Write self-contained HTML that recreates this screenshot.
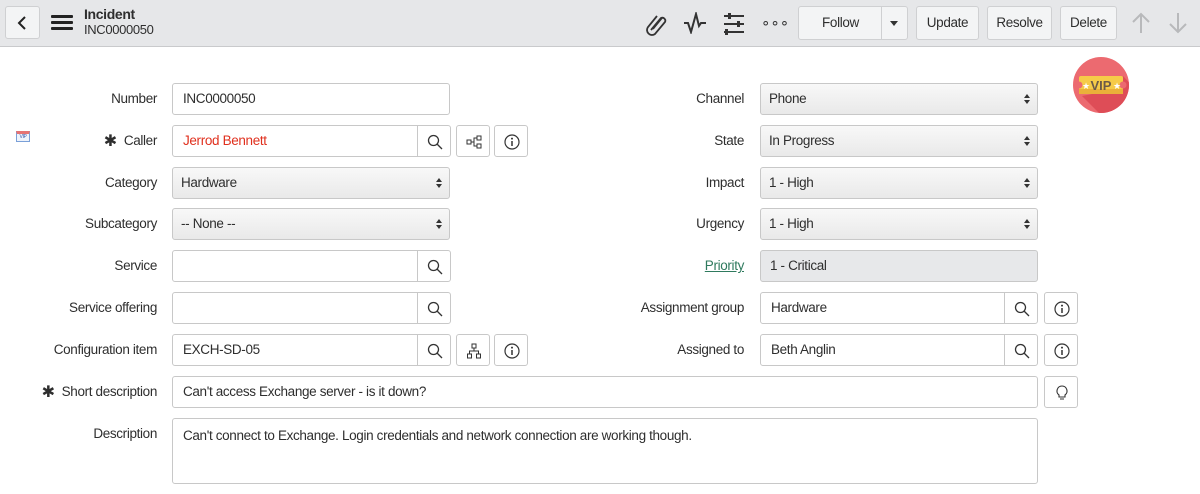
<!DOCTYPE html>
<html><head><meta charset="utf-8"><style>
*{box-sizing:border-box;margin:0;padding:0}
body{width:1200px;height:494px;background:#fff;font-family:"Liberation Sans",sans-serif;font-size:13px;color:#2e2e2e;position:relative;overflow:hidden;letter-spacing:-0.35px}
.hdr{position:absolute;left:0;top:0;width:1200px;height:47px;background:#e6e7e9;border-bottom:1px solid #c9cacc}
.a{position:absolute}
.btn{position:absolute;border:1px solid #cfd0d2;border-radius:3px;background:#f3f4f5;text-align:center;line-height:32px;font-size:13.5px;color:#2e2e2e}
.lbl{position:absolute;text-align:right;line-height:32px;font-size:13.5px;color:#2e2e2e}
.inp{position:absolute;height:32px;border:1px solid #c8c8c8;border-radius:3px;background:#fff;line-height:30px;padding-left:10px;font-size:13.5px}
.sel{background:linear-gradient(#f8f8f8,#e9e9e9);padding-left:8px}
.sel:after{content:"";position:absolute;right:7px;top:10px;border:3px solid transparent;border-bottom:4px solid #333;border-top:0;width:0}
.sel:before{content:"";position:absolute;right:7px;top:16px;border:3px solid transparent;border-top:4px solid #333;border-bottom:0;width:0}
.sb{position:absolute;height:32px;width:34px;border:1px solid #c8c8c8;border-radius:0 3px 3px 0;background:#fff}
.ib{position:absolute;height:32px;width:34px;border:1px solid #c8c8c8;border-radius:3px;background:#fff}
.sb svg,.ib svg{position:absolute;left:9px;top:8px}
.ast{display:inline-block;font-size:16px;position:relative;top:1px;margin-right:7px}
</style></head><body>
<div class="hdr"></div>
<div class="btn" style="left:5px;top:6px;width:35px;height:33px"><svg width="12" height="14" style="margin-top:9px" viewBox="0 0 12 14"><path d="M8 1L2 7l6 6" stroke="#222" stroke-width="2" fill="none"/></svg></div>
<div class="a" style="left:51px;top:15px;width:22px;height:3px;background:#222;border-radius:1px;box-shadow:0 6px 0 #222,0 12px 0 #222"></div>
<div class="a" style="left:84px;top:6px;font-weight:bold;font-size:14px">Incident</div>
<div class="a" style="left:84px;top:22px;font-size:13px">INC0000050</div>
<svg class="a" style="left:644px;top:12px" width="24" height="24" viewBox="0 0 24 24"><path d="M7 18L17 6a3 3 0 0 1 4 4L11 22a5 5 0 0 1-7-7L13 4" stroke="#333" stroke-width="1.8" fill="none"/><path d="M9 17l9-11" stroke="#333" stroke-width="1.6" fill="none"/></svg>
<svg class="a" style="left:683px;top:12px" width="24" height="22" viewBox="0 0 24 22"><path d="M1 11h4l3 9 5-18 3 12 2-3h5" stroke="#333" stroke-width="2" fill="none"/></svg>
<svg class="a" style="left:722px;top:12px" width="24" height="24" viewBox="0 0 24 24"><path d="M2 4h20M2 12h20M2 20h20" stroke="#333" stroke-width="2"/><rect x="6" y="1" width="3" height="6" fill="#333"/><rect x="15" y="9" width="3" height="6" fill="#333"/><rect x="3" y="17" width="3" height="6" fill="#333"/></svg>
<div class="a" style="left:761px;top:14px;font-size:15px;letter-spacing:0;color:#333">∘∘∘</div>
<div class="btn" style="left:798px;top:6px;width:110px;height:34px;line-height:32px"><span style="position:absolute;left:0;width:83px">Follow</span><span style="position:absolute;left:82px;top:0;height:32px;border-left:1px solid #cfd0d2;width:26px"></span><span style="position:absolute;left:91px;top:14px;border:4px solid transparent;border-top:5px solid #333"></span></div>
<div class="btn" style="left:916px;top:6px;width:63px;height:34px">Update</div>
<div class="btn" style="left:987px;top:6px;width:65px;height:34px">Resolve</div>
<div class="btn" style="left:1060px;top:6px;width:57px;height:34px">Delete</div>
<svg class="a" style="left:1131px;top:12px" width="20" height="22" viewBox="0 0 20 22"><path d="M10 21V2M2 10l8-8 8 8" stroke="#b8b9bb" stroke-width="2" fill="none"/></svg>
<svg class="a" style="left:1168px;top:12px" width="20" height="22" viewBox="0 0 20 22"><path d="M10 1v19M2 12l8 8 8-8" stroke="#b8b9bb" stroke-width="2" fill="none"/></svg>
<!-- VIP -->
<svg class="a" style="left:1072px;top:56px" width="58" height="58" viewBox="0 0 58 58"><defs><clipPath id="c"><circle cx="29" cy="29" r="28"/></clipPath></defs><circle cx="29" cy="29" r="28" fill="#ec6a70"/><path d="M20 38H51V20L70 40 40 70 10 40z" fill="#de4d57" clip-path="url(#c)"/><rect x="7" y="20" width="44" height="18" rx="2" fill="#f6cb48"/><rect x="7" y="33" width="44" height="5" fill="#eab03a"/><circle cx="7" cy="29" r="3.5" fill="#ec6a70"/><circle cx="51" cy="29" r="3.5" fill="#ec6a70"/><text x="29" y="34" text-anchor="middle" font-family="Liberation Sans" font-weight="bold" font-size="13" letter-spacing="0" fill="#6b5a48">VIP</text><text x="10" y="33" font-size="9" fill="#fff">★</text><text x="41" y="33" font-size="9" fill="#fff">★</text></svg>
<div class="a" style="left:16px;top:131px;width:14px;height:11px;border:1px solid #7aa0d8;border-top:3px solid #e57373;background:#eef3fb;font-size:5px;color:#3355aa;text-align:center;line-height:7px">VIP</div>

<div class="lbl" style="right:1043px;top:83px">Number</div>
<div class="lbl" style="right:1043px;top:125px"><span class="ast">✱</span>Caller</div>
<div class="lbl" style="right:1043px;top:167px">Category</div>
<div class="lbl" style="right:1043px;top:208px">Subcategory</div>
<div class="lbl" style="right:1043px;top:250px">Service</div>
<div class="lbl" style="right:1043px;top:292px">Service offering</div>
<div class="lbl" style="right:1043px;top:334px">Configuration item</div>
<div class="lbl" style="right:1043px;top:376px"><span class="ast">✱</span>Short description</div>
<div class="lbl" style="right:1043px;top:418px">Description</div>

<div class="inp" style="left:172px;top:83px;width:278px">INC0000050</div>
<div class="inp" style="left:172px;top:125px;width:246px;border-radius:3px 0 0 3px;color:#e0301e">Jerrod Bennett</div>
<div class="sb" style="left:417px;top:125px"><svg width="16" height="16"><circle cx="6.5" cy="6.5" r="5" stroke="#333" stroke-width="1.3" fill="none"/><path d="M10 10l5 5" stroke="#333" stroke-width="1.3"/></svg></div>
<div class="ib" style="left:456px;top:125px"><svg width="16" height="16"><rect x="1" y="6" width="4" height="4" stroke="#333" fill="none"/><rect x="11" y="2" width="4" height="4" stroke="#333" fill="none"/><rect x="11" y="10" width="4" height="4" stroke="#333" fill="none"/><path d="M5 8h3V4h3M8 8v4h3" stroke="#333" fill="none"/></svg></div>
<div class="ib" style="left:494px;top:125px"><svg width="16" height="16"><circle cx="8" cy="8" r="7" stroke="#333" stroke-width="1.2" fill="none"/><path d="M8 7v5" stroke="#333" stroke-width="1.5"/><circle cx="8" cy="4.6" r="1" fill="#333"/></svg></div>
<div class="inp sel" style="left:172px;top:167px;width:278px">Hardware</div>
<div class="inp sel" style="left:172px;top:208px;width:278px">-- None --</div>
<div class="inp" style="left:172px;top:250px;width:246px;border-radius:3px 0 0 3px"></div>
<div class="sb" style="left:417px;top:250px"><svg width="16" height="16"><circle cx="6.5" cy="6.5" r="5" stroke="#333" stroke-width="1.3" fill="none"/><path d="M10 10l5 5" stroke="#333" stroke-width="1.3"/></svg></div>
<div class="inp" style="left:172px;top:292px;width:246px;border-radius:3px 0 0 3px"></div>
<div class="sb" style="left:417px;top:292px"><svg width="16" height="16"><circle cx="6.5" cy="6.5" r="5" stroke="#333" stroke-width="1.3" fill="none"/><path d="M10 10l5 5" stroke="#333" stroke-width="1.3"/></svg></div>
<div class="inp" style="left:172px;top:334px;width:246px;border-radius:3px 0 0 3px">EXCH-SD-05</div>
<div class="sb" style="left:417px;top:334px"><svg width="16" height="16"><circle cx="6.5" cy="6.5" r="5" stroke="#333" stroke-width="1.3" fill="none"/><path d="M10 10l5 5" stroke="#333" stroke-width="1.3"/></svg></div>
<div class="ib" style="left:456px;top:334px"><svg width="16" height="16"><rect x="6" y="1" width="4" height="4" stroke="#333" fill="none"/><rect x="1.5" y="11" width="4" height="4" stroke="#333" fill="none"/><rect x="10.5" y="11" width="4" height="4" stroke="#333" fill="none"/><path d="M8 5v3M3.5 11V8h9v3" stroke="#333" fill="none"/></svg></div>
<div class="ib" style="left:494px;top:334px"><svg width="16" height="16"><circle cx="8" cy="8" r="7" stroke="#333" stroke-width="1.2" fill="none"/><path d="M8 7v5" stroke="#333" stroke-width="1.5"/><circle cx="8" cy="4.6" r="1" fill="#333"/></svg></div>
<div class="inp" style="left:172px;top:376px;width:866px">Can't access Exchange server - is it down?</div>
<div class="ib" style="left:1044px;top:376px"><svg width="16" height="16"><path d="M8 1a5 5 0 0 0-3 9v2h6v-2a5 5 0 0 0-3-9zM6 14h4" stroke="#333" stroke-width="1.1" fill="none"/></svg></div>
<div class="inp" style="left:172px;top:418px;width:866px;height:66px;line-height:16px;padding-top:9px">Can't connect to Exchange. Login credentials and network connection are working though.</div>

<div class="lbl" style="right:456px;top:83px">Channel</div>
<div class="lbl" style="right:456px;top:125px">State</div>
<div class="lbl" style="right:456px;top:167px">Impact</div>
<div class="lbl" style="right:456px;top:208px">Urgency</div>
<div class="lbl" style="right:456px;top:250px;color:#2f7a5e;text-decoration:underline">Priority</div>
<div class="lbl" style="right:456px;top:292px">Assignment group</div>
<div class="lbl" style="right:456px;top:334px">Assigned to</div>
<div class="inp sel" style="left:760px;top:83px;width:278px">Phone</div>
<div class="inp sel" style="left:760px;top:125px;width:278px">In Progress</div>
<div class="inp sel" style="left:760px;top:167px;width:278px">1 - High</div>
<div class="inp sel" style="left:760px;top:208px;width:278px">1 - High</div>
<div class="inp" style="left:760px;top:250px;width:278px;background:#e7e8ea;padding-left:9px">1 - Critical</div>
<div class="inp" style="left:760px;top:292px;width:245px;border-radius:3px 0 0 3px">Hardware</div>
<div class="sb" style="left:1004px;top:292px"><svg width="16" height="16"><circle cx="6.5" cy="6.5" r="5" stroke="#333" stroke-width="1.3" fill="none"/><path d="M10 10l5 5" stroke="#333" stroke-width="1.3"/></svg></div>
<div class="ib" style="left:1044px;top:292px"><svg width="16" height="16"><circle cx="8" cy="8" r="7" stroke="#333" stroke-width="1.2" fill="none"/><path d="M8 7v5" stroke="#333" stroke-width="1.5"/><circle cx="8" cy="4.6" r="1" fill="#333"/></svg></div>
<div class="inp" style="left:760px;top:334px;width:245px;border-radius:3px 0 0 3px">Beth Anglin</div>
<div class="sb" style="left:1004px;top:334px"><svg width="16" height="16"><circle cx="6.5" cy="6.5" r="5" stroke="#333" stroke-width="1.3" fill="none"/><path d="M10 10l5 5" stroke="#333" stroke-width="1.3"/></svg></div>
<div class="ib" style="left:1044px;top:334px"><svg width="16" height="16"><circle cx="8" cy="8" r="7" stroke="#333" stroke-width="1.2" fill="none"/><path d="M8 7v5" stroke="#333" stroke-width="1.5"/><circle cx="8" cy="4.6" r="1" fill="#333"/></svg></div>
</body></html>
